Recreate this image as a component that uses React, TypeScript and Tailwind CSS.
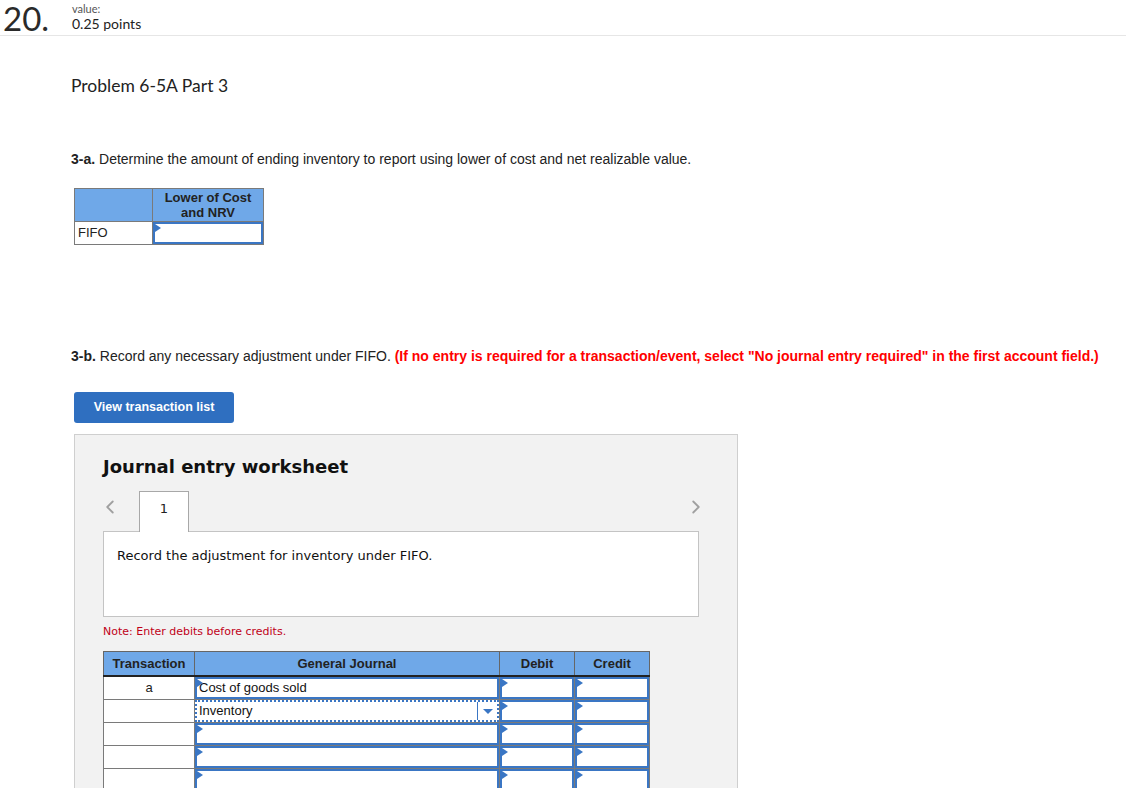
import { ChevronLeft, ChevronRight } from 'lucide-react';

const arial = { fontFamily: '"Liberation Sans", Arial, sans-serif' };
const verdana = { fontFamily: '"DejaVu Sans", Verdana, sans-serif' };
const proxima = { fontFamily: 'Lato, "Open Sans", sans-serif' };

// little blue marker in the top-left corner of input cells
const Marker = () => (
  <span className="absolute left-0 top-0 w-0 h-0 border-y-[4px] border-y-transparent border-l-[6px] border-l-[#3a76c4]" />
);

const InputCell = ({ children }: { children?: React.ReactNode }) => (
  <div className="relative h-[22px] border-2 border-[#3a76c4] bg-white px-[2px] text-[13px] leading-[18px] text-[#111]">
    <Marker />
    {children}
  </div>
);

const rows = [
  { tx: 'a', account: 'Cost of goods sold' },
  { tx: '', account: 'Inventory', focused: true },
  { tx: '', account: '' },
  { tx: '', account: '' },
  { tx: '', account: '' },
  { tx: '', account: '' },
];

export default function App() {
  return (
    <div className="bg-white min-h-screen text-[#222]" style={arial}>
      {/* Question header */}
      <div className="flex items-start h-[36px] border-b border-[#e6e6e6]" style={proxima}>
        <div className="w-[72px] pl-[3px] pt-[1px] text-[33px] leading-[34px] text-[#2a2a2a]">20.</div>
        <div className="pt-[3px]">
          <div className="text-[11px] leading-[12px] text-[#555]">value:</div>
          <div className="text-[14px] leading-[17px] text-[#222]">0.25 points</div>
        </div>
      </div>

      <div className="pl-[71px]">
        <div className="mt-[39px] text-[17.5px] leading-[22px] text-[#222]" style={proxima}>
          Problem 6-5A Part 3
        </div>

        <p className="mt-[54px] text-[14px] leading-[17px]">
          <b>3-a.</b> Determine the amount of ending inventory to report using lower of cost and net realizable value.
        </p>

        {/* Lower of cost table */}
        <table className="mt-[20px] ml-[3px] border-collapse text-[13px]">
          <thead>
            <tr className="bg-[#6fa8e8]">
              <th className="w-[78px] h-[33px] border border-[#7a7a7a]" />
              <th className="w-[111px] h-[33px] border border-[#7a7a7a] font-bold leading-[15px] text-[#222]">
                Lower of Cost
                <br />
                and NRV
              </th>
            </tr>
          </thead>
          <tbody>
            <tr>
              <td className="h-[23px] border border-[#7a7a7a] px-[3px] text-[13px] text-left">FIFO</td>
              <td className="p-0 border border-[#7a7a7a]">
                <InputCell />
              </td>
            </tr>
          </tbody>
        </table>

        <p className="mt-[103px] text-[14px] leading-[17px]">
          <b>3-b.</b> Record any necessary adjustment under FIFO.{' '}
          <b className="text-[#ff0000]">
            (If no entry is required for a transaction/event, select "No journal entry required" in the first account field.)
          </b>
        </p>

        <button className="mt-[27px] ml-[3px] w-[160px] h-[31px] rounded-[3px] bg-[#2f6fc0] text-white text-[12.5px] font-bold">
          View transaction list
        </button>

        {/* Worksheet */}
        <div className="mt-[11px] ml-[3px] w-[664px] h-[420px] bg-[#f2f2f2] border border-[#cfcfcf] pl-[28px] pt-[21px]">
          <h2 className="text-[18px] leading-[22px] font-bold text-[#111]" style={verdana}>
            Journal entry worksheet
          </h2>

          <div className="mt-[13px] flex items-start w-[604px]">
            <ChevronLeft className="mt-[5px] ml-[-4px] w-[22px] h-[22px] text-[#a0a0a0]" strokeWidth={2} />
            <div
              className="ml-[18px] w-[50px] h-[41px] -mb-px relative z-10 bg-white border border-b-0 border-[#a8a8a8] text-center text-[13px] pt-[7px]"
              style={verdana}
            >
              1
            </div>
            <div className="flex-1" />
            <ChevronRight className="mt-[5px] w-[22px] h-[22px] text-[#a0a0a0]" strokeWidth={2} />
          </div>

          <div className="w-[596px] h-[86px] bg-white border border-[#c4c4c4] px-[13px] pt-[14px] text-[13px] text-[#111]" style={verdana}>
            Record the adjustment for inventory under FIFO.
          </div>

          <div className="mt-[7px] text-[11px] text-[#c00018]" style={verdana}>
            Note: Enter debits before credits.
          </div>

          {/* Journal table */}
          <table className="mt-[10px] border-collapse text-[13px]">
            <thead>
              <tr className="bg-[#6fa8e8] text-[#222]">
                <th className="w-[91px] h-[25px] border border-[#666] border-b-2 border-b-[#222] font-bold">Transaction</th>
                <th className="w-[305px] h-[25px] border border-[#666] border-b-2 border-b-[#222] font-bold">General Journal</th>
                <th className="w-[75px] h-[25px] border border-[#666] border-b-2 border-b-[#222] font-bold">Debit</th>
                <th className="w-[75px] h-[25px] border border-[#666] border-b-2 border-b-[#222] font-bold">Credit</th>
              </tr>
            </thead>
            <tbody>
              {rows.map((r, i) => (
                <tr key={i}>
                  <td className="h-[23px] border border-[#7a7a7a] bg-white text-center text-[13px] p-0">{r.tx}</td>
                  <td className="p-0 border border-[#7a7a7a]">
                    {r.focused ? (
                      <div className="relative flex h-[22px] border-2 border-dotted border-[#3a76c4] bg-white text-[13px] leading-[18px] text-[#111]">
                        <span className="flex-1 px-[2px]">{r.account}</span>
                        <span className="w-[20px] border-l border-[#3a76c4] flex items-center justify-center">
                          <span className="w-0 h-0 border-x-[5px] border-x-transparent border-t-[5px] border-t-[#3a76c4]" />
                        </span>
                      </div>
                    ) : (
                      <InputCell>{r.account}</InputCell>
                    )}
                  </td>
                  <td className="p-0 border border-[#7a7a7a]">
                    <InputCell />
                  </td>
                  <td className="p-0 border border-[#7a7a7a]">
                    <InputCell />
                  </td>
                </tr>
              ))}
            </tbody>
          </table>
        </div>
      </div>
    </div>
  );
}
